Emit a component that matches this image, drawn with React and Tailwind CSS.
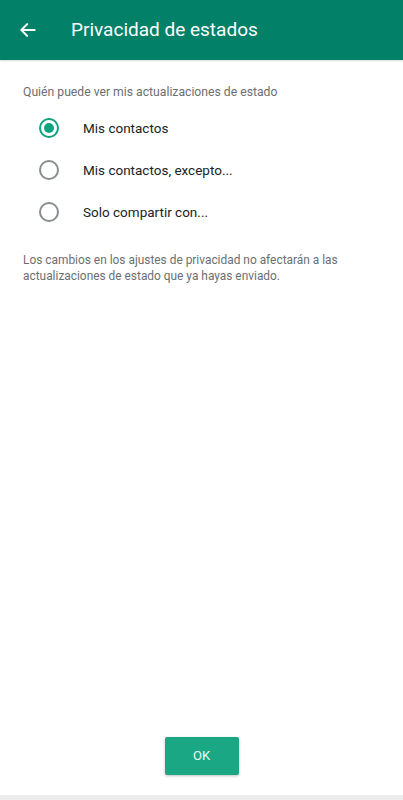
import React, { useState } from "react";

const options = [
  { id: "contacts", label: "Mis contactos" },
  { id: "except", label: "Mis contactos, excepto..." },
  { id: "only", label: "Solo compartir con..." },
];

function Radio({ checked }) {
  return (
    <span
      className={`flex h-[20px] w-[20px] items-center justify-center rounded-full border-2 ${
        checked ? "border-[#0fa47f]" : "border-[#8a8d8f]"
      }`}
    >
      {checked && <span className="h-[10px] w-[10px] rounded-full bg-[#0fa47f]" />}
    </span>
  );
}

export default function App() {
  const [selected, setSelected] = useState("contacts");

  return (
    <div className="flex h-[800px] w-full flex-col bg-white font-['Roboto',sans-serif]">
      {/* Header */}
      <div className="flex h-[60px] shrink-0 items-center bg-[#028068] shadow-[0_1px_2px_rgba(0,0,0,0.15)]">
        <button className="ml-[18px] flex h-[30px] w-[20px] items-center justify-center text-white">
          <svg viewBox="0 0 24 24" className="h-[20px] w-[20px]" fill="none" stroke="currentColor" strokeWidth="2.4" strokeLinecap="round" strokeLinejoin="round">
            <path d="M20 12H5" />
            <path d="M11 5l-7 7 7 7" />
          </svg>
        </button>
        <h1 className="ml-[33px] text-[19px] text-white">Privacidad de estados</h1>
      </div>

      {/* Content */}
      <div className="flex-1 px-[23px]">
        <p className="mt-[23px] text-[12.2px] text-[#6b6f72]">Quién puede ver mis actualizaciones de estado</p>

        <div className="mt-[17px] flex flex-col gap-[22px] pl-[16px]">
          {options.map((o) => (
            <button
              key={o.id}
              onClick={() => setSelected(o.id)}
              className="flex h-[20px] items-center gap-[24px] text-left"
            >
              <Radio checked={selected === o.id} />
              <span className="text-[13.5px] text-[#202325]">{o.label}</span>
            </button>
          ))}
        </div>

        <p className="mt-[30px] text-[11.9px] leading-[16px] text-[#6b6f72]">
          Los cambios en los ajustes de privacidad no afectarán a las actualizaciones de estado que ya hayas enviado.
        </p>
      </div>

      {/* Footer */}
      <div className="flex justify-center pb-[20px]">
        <button className="h-[38px] w-[74px] rounded-[2px] bg-[#1aa884] text-[13px] text-[#e9fbf4] shadow-[0_1px_3px_rgba(0,0,0,0.25)]">
          OK
        </button>
      </div>
      <div className="h-[5px] shrink-0 bg-[#ececec]" />
    </div>
  );
}
